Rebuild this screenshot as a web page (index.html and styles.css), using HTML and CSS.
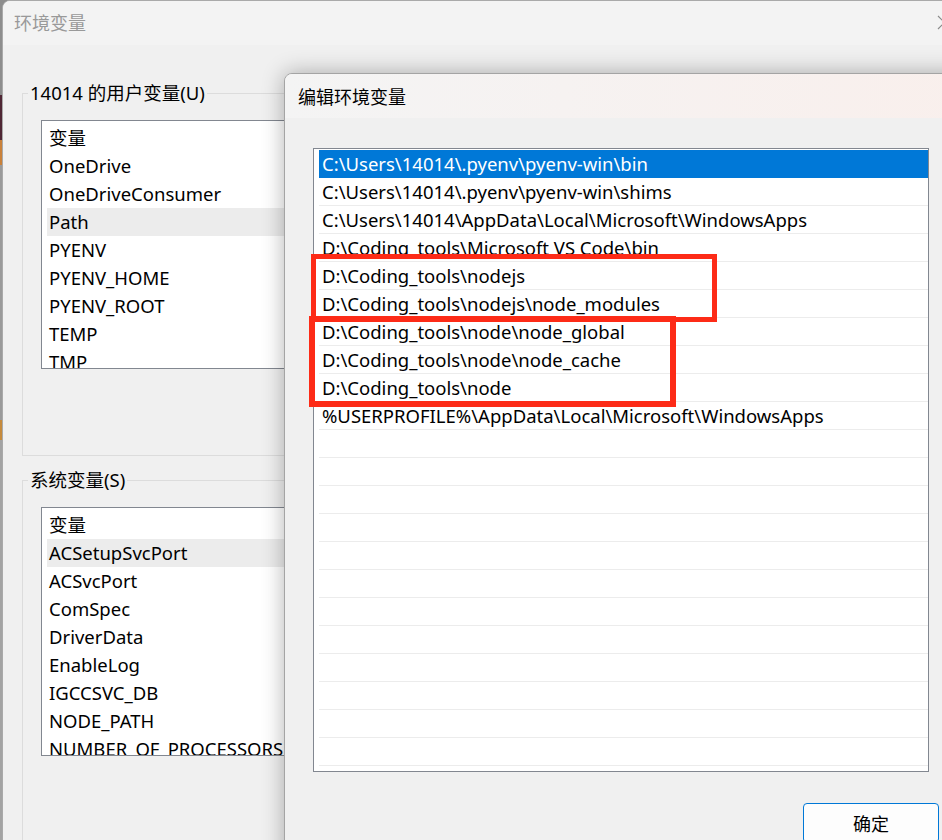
FILE: index.html
```html
<!DOCTYPE html>
<html lang="zh-CN">
<head>
    <meta charset="UTF-8">
    <meta name="viewport" content="width=device-width, initial-scale=1.0">
    <title>环境变量</title>
    <link rel="stylesheet" href="styles.css">
</head>
<body>
    <div class="desktop">

        <!-- Back window: 环境变量 -->
        <div class="window env-window">
            <div class="titlebar">
                <span class="title">环境变量</span>
                <span class="close-btn">
                    <svg width="15" height="15" viewBox="0 0 15 15">
                        <path d="M1 1 L14 14 M14 1 L1 14" stroke="#8c8c8c" stroke-width="1.2" fill="none"/>
                    </svg>
                </span>
            </div>
            <div class="window-body">
                <fieldset class="group">
                    <legend>14014 的用户变量(U)</legend>
                    <div class="listbox">
                        <div class="item">变量</div>
                        <div class="item">OneDrive</div>
                        <div class="item">OneDriveConsumer</div>
                        <div class="item hover">Path</div>
                        <div class="item">PYENV</div>
                        <div class="item">PYENV_HOME</div>
                        <div class="item">PYENV_ROOT</div>
                        <div class="item">TEMP</div>
                        <div class="item">TMP</div>
                    </div>
                </fieldset>
                <fieldset class="group group-system">
                    <legend>系统变量(S)</legend>
                    <div class="listbox">
                        <div class="item">变量</div>
                        <div class="item hover">ACSetupSvcPort</div>
                        <div class="item">ACSvcPort</div>
                        <div class="item">ComSpec</div>
                        <div class="item">DriverData</div>
                        <div class="item">EnableLog</div>
                        <div class="item">IGCCSVC_DB</div>
                        <div class="item">NODE_PATH</div>
                        <div class="item">NUMBER_OF_PROCESSORS</div>
                    </div>
                </fieldset>
            </div>
        </div>

        <!-- Front window: 编辑环境变量 -->
        <div class="window edit-window">
            <div class="titlebar">
                <span class="title">编辑环境变量</span>
            </div>
            <div class="window-body">
                <div class="list-wrap">
                    <div class="path-list">
                        <div class="path-row selected">C:\Users\14014\.pyenv\pyenv-win\bin</div>
                        <div class="path-row">C:\Users\14014\.pyenv\pyenv-win\shims</div>
                        <div class="path-row">C:\Users\14014\AppData\Local\Microsoft\WindowsApps</div>
                        <div class="path-row">D:\Coding_tools\Microsoft VS Code\bin</div>
                        <div class="path-row">D:\Coding_tools\nodejs</div>
                        <div class="path-row">D:\Coding_tools\nodejs\node_modules</div>
                        <div class="path-row">D:\Coding_tools\node\node_global</div>
                        <div class="path-row">D:\Coding_tools\node\node_cache</div>
                        <div class="path-row">D:\Coding_tools\node</div>
                        <div class="path-row">%USERPROFILE%\AppData\Local\Microsoft\WindowsApps</div>
                        <div class="path-row"></div>
                        <div class="path-row"></div>
                        <div class="path-row"></div>
                        <div class="path-row"></div>
                        <div class="path-row"></div>
                        <div class="path-row"></div>
                        <div class="path-row"></div>
                        <div class="path-row"></div>
                        <div class="path-row"></div>
                        <div class="path-row"></div>
                        <div class="path-row"></div>
                        <div class="path-row"></div>
                    </div>
                    <!-- red highlight boxes -->
                    <div class="mark mark-nodejs"></div>
                    <div class="mark mark-node"></div>
                </div>
                <div class="actions">
                    <button class="btn-ok">确定</button>
                </div>
            </div>
        </div>

    </div>
</body>
</html>
```

FILE: styles.css
```css
* {
    margin: 0;
    padding: 0;
    box-sizing: border-box;
}

body {
    font-family: "Noto Sans", "Noto Sans CJK SC", sans-serif;
    font-size: 18.5px;
    color: #000;
    background: #3a2a33;
}

.desktop {
    position: relative;
    width: 942px;
    height: 840px;
    overflow: hidden;
    background: linear-gradient(180deg, #8d8d8d 0, #8d8d8d 95px, #4f2634 95px, #4f2634 140px,
        #c9813a 140px, #c9813a 165px, #9a9a9a 165px, #9a9a9a 420px, #c58a3d 420px,
        #c58a3d 440px, #a3a3a3 440px);
}

.window {
    background-color: #f0f0f0;
    border: 1px solid #a9a9a9;
    border-radius: 8px 8px 0 0;
    overflow: hidden;
}

.titlebar {
    display: flex;
    align-items: center;
    height: 44px;
    font-size: 18px;
    white-space: nowrap;
}

/* back window */
.env-window {
    margin-left: 2px;
    width: 966px;
    height: 860px;
}

.env-window .titlebar {
    background-color: #f3f3f3;
    padding: 0 0 2px 11px;
}

.env-window .title {
    color: #999;
}

.close-btn {
    margin-left: auto;
    width: 46px;
    display: flex;
    justify-content: center;
    padding-top: 1px;
}

.env-window .window-body {
    padding: 36px 0 0 19px;
}

.group {
    width: 640px;
    border: 1px solid #dcdcdc;
    padding: 15px 0 86px 0;
}

.group legend {
    margin-left: 5px;
    padding: 0 2px;
    line-height: 24px;
}

.group-system {
    margin-top: 12px;
}

.listbox {
    margin-left: 18px;
    width: 560px;
    height: 249px;
    border: 1px solid #828790;
    background-color: #fff;
    padding-top: 3px;
    overflow: hidden;
}

.item {
    height: 28px;
    line-height: 28px;
    margin-left: 5px;
    padding-left: 2px;
    white-space: nowrap;
}

.item.hover {
    background-color: #ececec;
}

/* front window */
.edit-window {
    position: absolute;
    left: 284px;
    top: 73px;
    width: 700px;
    height: 800px;
    border-color: #a4a4a4;
    box-shadow: 0 0 22px rgba(0, 0, 0, 0.3);
}

.edit-window .titlebar {
    background: linear-gradient(90deg, #f4f4f4, #f6f2f1 40%, #f9efec);
    padding-left: 13px;
}

.edit-window .window-body {
    padding: 30px 0 0 28px;
}

.list-wrap {
    position: relative;
    width: 616px;
}

.path-list {
    height: 624px;
    border: 1px solid #828790;
    background-color: #fff;
    padding: 1px 0 0 5px;
    overflow: hidden;
}

.path-row {
    height: 28px;
    line-height: 27px;
    border-bottom: 1px solid #ececec;
    padding-left: 3px;
    white-space: nowrap;
}

.path-row.selected {
    background-color: #0078d7;
    border-bottom-color: #0078d7;
    color: #fff;
}

.mark {
    position: absolute;
    border: 5px solid #fd2b17;
}

.mark-nodejs {
    left: -2px;
    top: 106px;
    width: 406px;
    height: 68px;
}

.mark-node {
    left: -4px;
    top: 168px;
    width: 367px;
    height: 91px;
    border-width: 6px;
}

.actions {
    display: flex;
    margin-top: 31px;
    padding-left: 490px;
}

.btn-ok {
    width: 136px;
    height: 40px;
    border: 1px solid #0078d7;
    border-radius: 4px;
    background-color: #fdfdfd;
    font-family: inherit;
    font-size: 18px;
    color: #000;
}
```
